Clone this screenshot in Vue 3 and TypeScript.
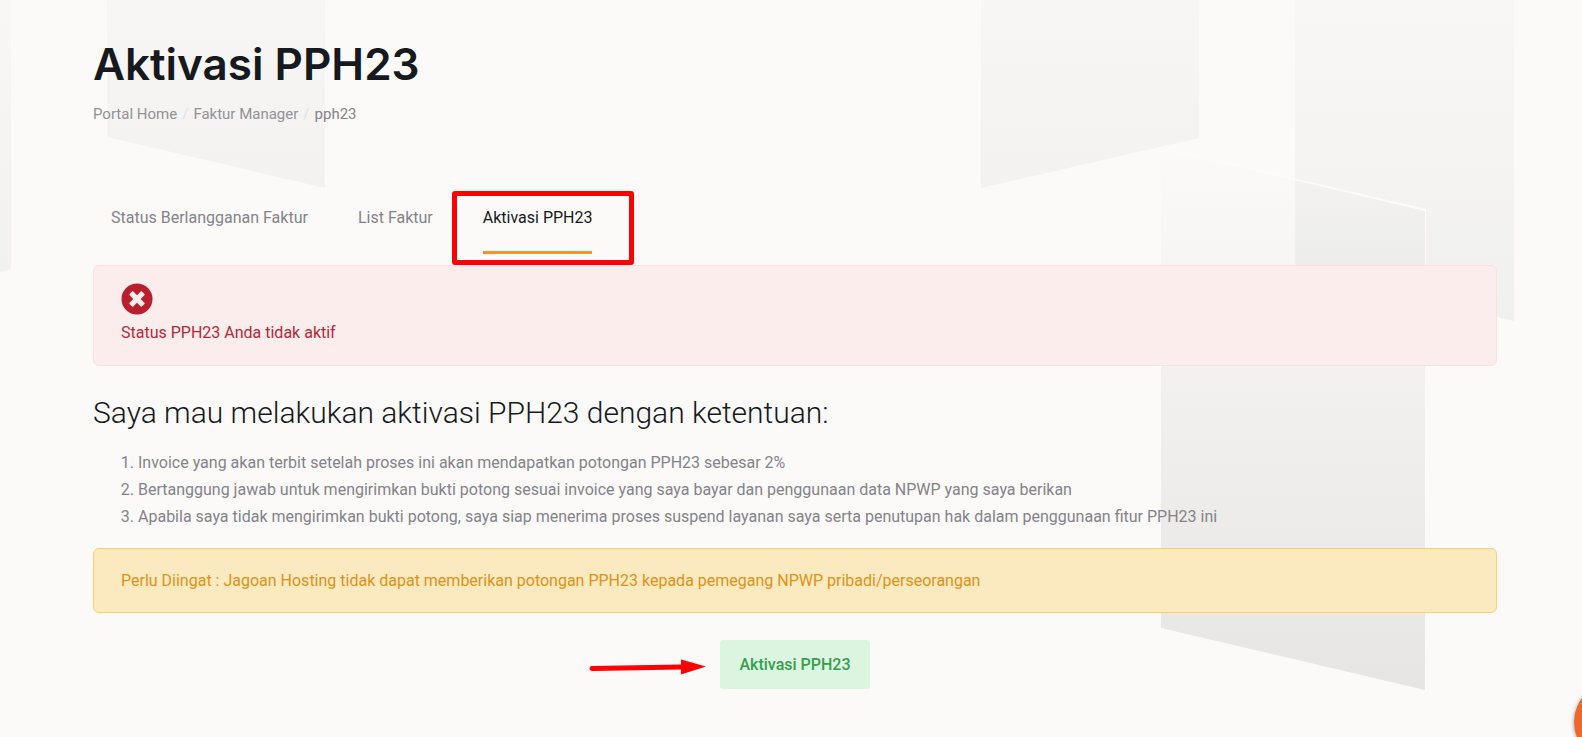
<script setup lang="ts">
interface NavItem {
  label: string
  active?: boolean
}

const title = 'Aktivasi PPH23'

const crumbs: NavItem[] = [
  { label: 'Portal Home' },
  { label: 'Faktur Manager' },
  { label: 'pph23', active: true },
]

const tabs: NavItem[] = [
  { label: 'Status Berlangganan Faktur' },
  { label: 'List Faktur' },
  { label: 'Aktivasi PPH23', active: true },
]

const terms: string[] = [
  'Invoice yang akan terbit setelah proses ini akan mendapatkan potongan PPH23 sebesar 2%',
  'Bertanggung jawab untuk mengirimkan bukti potong sesuai invoice yang saya bayar dan penggunaan data NPWP yang saya berikan',
  'Apabila saya tidak mengirimkan bukti potong, saya siap menerima proses suspend layanan saya serta penutupan hak dalam penggunaan fitur PPH23 ini',
]
</script>

<template>
  <div class="page">
    <svg class="backdrop" viewBox="0 0 1582 737" preserveAspectRatio="xMidYMin slice" aria-hidden="true">
      <defs>
        <linearGradient id="shade-short" x1="0" y1="0" x2="0" y2="188" gradientUnits="userSpaceOnUse">
          <stop offset="0" stop-color="#f7f6f4" />
          <stop offset="1" stop-color="#f3f2f0" />
        </linearGradient>
        <linearGradient id="shade-tall" x1="0" y1="0" x2="0" y2="321" gradientUnits="userSpaceOnUse">
          <stop offset="0" stop-color="#f8f7f5" />
          <stop offset="1" stop-color="#f0f0ee" />
        </linearGradient>
        <linearGradient id="shade-front" x1="0" y1="148" x2="0" y2="690" gradientUnits="userSpaceOnUse">
          <stop offset="0" stop-color="#606060" stop-opacity="0" />
          <stop offset="0.5" stop-color="#606060" stop-opacity="0.07" />
          <stop offset="1" stop-color="#606060" stop-opacity="0.135" />
        </linearGradient>
        <linearGradient id="edge-top" x1="1161" y1="0" x2="1425" y2="0" gradientUnits="userSpaceOnUse">
          <stop offset="0" stop-color="#fdfcfb" stop-opacity="0.4" />
          <stop offset="1" stop-color="#fdfcfb" />
        </linearGradient>
      </defs>
      <polygon points="0,0 11,0 11,269 0,272" fill="url(#shade-tall)" />
      <polygon points="107,0 325,0 325,188 107,137" fill="url(#shade-short)" />
      <polygon points="981,0 1199,0 1199,138 981,188" fill="url(#shade-short)" />
      <polygon points="1295,0 1514,0 1514,321 1295,270" fill="url(#shade-tall)" />
      <polygon points="1161,148 1425,210 1425,690 1161,628" fill="url(#shade-front)" />
      <path d="M1161 148 1425.500 210" fill="none" stroke="url(#edge-top)" stroke-width="2" />
      <path d="M1425.500 210V690" fill="none" stroke="#fcfbfa" stroke-width="1" />
    </svg>

    <main class="container">
      <header class="heading">
        <h1>{{ title }}</h1>
        <nav aria-label="Breadcrumb">
          <ol class="crumbs">
            <li v-for="crumb in crumbs" :key="crumb.label">
              <span v-if="crumb.active" class="current" aria-current="page">{{ crumb.label }}</span>
              <a v-else href="#">{{ crumb.label }}</a>
            </li>
          </ol>
        </nav>
      </header>

      <nav class="tabs" aria-label="Faktur">
        <a
          v-for="tab in tabs"
          :key="tab.label"
          href="#"
          class="tab"
          :class="{ active: tab.active }"
          :aria-current="tab.active ? 'page' : undefined"
        >
          {{ tab.label }}
          <span v-if="tab.active" class="marker"></span>
        </a>
      </nav>

      <div class="alert danger" role="alert">
        <svg class="alert-icon" viewBox="0 0 32 32" aria-hidden="true">
          <circle cx="16" cy="16" r="15.500" fill="#b8202e" />
          <path
            d="M12.300 8.600 16 12.300 19.700 8.600Q20.300 8 20.900 8.600L23.400 11.100Q24 11.700 23.400 12.300L19.700 16 23.400 19.700Q24 20.300 23.400 20.900L20.900 23.400Q20.300 24 19.700 23.400L16 19.700 12.300 23.400Q11.700 24 11.100 23.400L8.600 20.900Q8 20.300 8.600 19.700L12.300 16 8.600 12.300Q8 11.700 8.600 11.100L11.100 8.600Q11.700 8 12.300 8.600Z"
            fill="#fceded"
          />
        </svg>
        <p>Status PPH23 Anda tidak aktif</p>
      </div>

      <h2>Saya mau melakukan aktivasi PPH23 dengan ketentuan:</h2>
      <ol class="terms">
        <li v-for="term in terms" :key="term">{{ term }}</li>
      </ol>

      <div class="alert warning" role="note">
        <p>Perlu Diingat : Jagoan Hosting tidak dapat memberikan potongan PPH23 kepada pemegang NPWP pribadi/perseorangan</p>
      </div>

      <div class="actions">
        <div class="action">
          <svg class="arrow" viewBox="0 0 118 18" aria-hidden="true">
            <path d="M4 10.500 94 9" fill="none" stroke="#f00" stroke-width="5" stroke-linecap="round" />
            <path d="M93 1.500V16.500L118 8.500Z" fill="#f00" />
          </svg>
          <button type="button" class="activate">Aktivasi PPH23</button>
        </div>
      </div>
    </main>

    <button type="button" class="chat" aria-label="Chat"></button>
  </div>
</template>

<style>
body {
  background: #fbfaf8;
}
</style>

<style scoped>
.page {
  position: relative;
  box-sizing: border-box;
  min-height: 100vh;
  overflow: hidden;
  background: #fbfaf8;
  color: #84838b;
  font-family: Roboto, "Liberation Sans", sans-serif;
  font-size: 16px;
  line-height: 27px;
}

.backdrop {
  position: absolute;
  inset: 0;
  width: 100%;
  height: 100%;
}

.container {
  position: relative;
  padding: 34px 85px 46px 93px;
}

h1,
h2,
p {
  margin: 0;
}

h1 {
  color: #16191d;
  font-family: Inter, Roboto, sans-serif;
  font-size: 44px;
  font-weight: 600;
  line-height: 60px;
}

.crumbs {
  display: flex;
  flex-wrap: wrap;
  margin: 8px 0 0;
  padding: 0;
  list-style: none;
  font-size: 15px;
  line-height: 24px;
}

.crumbs a {
  color: #92919a;
  text-decoration: none;
}

.crumbs li + li::before {
  content: "/";
  padding: 0 5px;
  color: #e2dfe6;
}

.current {
  color: #84838b;
}

.tabs {
  display: flex;
  gap: 50px;
  margin: 78px 18px 11px;
}

.tab {
  position: relative;
  padding-bottom: 20px;
  border-bottom: 3px solid transparent;
  color: #84838b;
  text-decoration: none;
}

.tab.active {
  border-color: #f5942f;
  color: #16191d;
}

.marker {
  position: absolute;
  inset: -13px -42px -14px -31px;
  border: 5px solid #f00;
  border-radius: 3px;
}

.alert {
  padding: 17px 27px;
  border: 1px solid;
  border-radius: 6px;
}

.danger {
  padding-bottom: 19px;
  background: #fceded;
  border-color: #fbdfe1;
  color: #b12a39;
}

.alert-icon {
  display: block;
  width: 32px;
  height: 32px;
  margin-bottom: 4px;
}

.warning {
  padding: 18px 27px;
  background: #fbe9bf;
  border-color: #ffd06a;
  color: #dc931a;
}

h2 {
  margin: 29px 0 18px;
  color: #16191d;
  font-size: 30px;
  font-weight: 300;
  line-height: 36px;
}

.terms {
  margin: 0 0 18px;
  padding-left: 45px;
}

.actions {
  display: flex;
  justify-content: center;
  margin-top: 27px;
}

.action {
  position: relative;
}

.arrow {
  position: absolute;
  top: 18px;
  right: 100%;
  width: 118px;
  height: 18px;
  margin-right: 14px;
}

.activate {
  display: block;
  padding: 11px 19px;
  border: 0;
  border-radius: 3px;
  background: #dcf5e0;
  color: #34a04e;
  font-family: inherit;
  font-size: 16px;
  font-weight: 500;
  line-height: 27px;
}

.chat {
  position: absolute;
  right: -72px;
  bottom: -25px;
  width: 80px;
  height: 80px;
  padding: 0;
  border: 0;
  border-radius: 50%;
  background: #ee672b;
  box-shadow: 0 1px 4px rgba(0, 0, 0, 0.4);
}
</style>
